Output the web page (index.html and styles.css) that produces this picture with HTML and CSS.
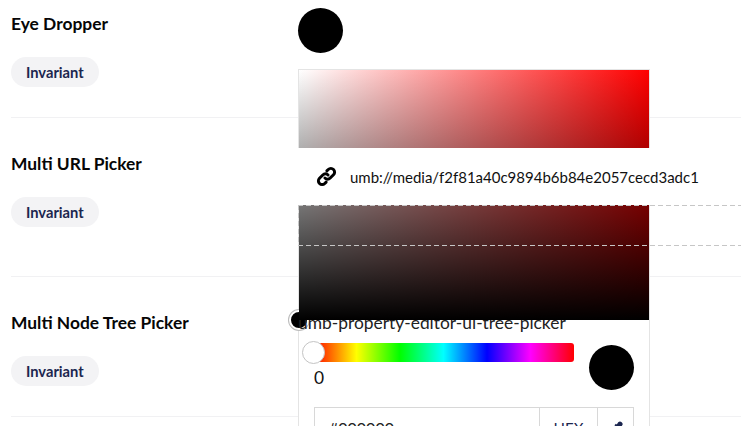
FILE: index.html
```html
<!DOCTYPE html>
<html lang="en">
<head>
<meta charset="utf-8">
<title>Property editors</title>
<link rel="stylesheet" href="styles.css">
</head>
<body>
<main class="list">
  <section class="row row-first">
    <div class="meta">
      <h3 class="label">Eye Dropper</h3>
      <span class="tag">Invariant</span>
    </div>
    <div class="editor">
      <div class="swatch"></div>
      <div class="picker">
        <span class="sv-handle"></span>
        <div class="sv"></div>
        <div class="controls">
          <div class="sliders">
            <div class="hue"><span class="hue-thumb"></span></div>
            <div class="hue-value">0</div>
          </div>
          <div class="preview"></div>
        </div>
        <div class="hex-row">
          <span class="hex-value">#000000</span>
          <span class="hex-mode">HEX</span>
          <span class="hex-swap">
            <svg viewBox="0 0 16 16" width="16" height="16" aria-hidden="true"><path d="M10.2 1.2a2.6 2.6 0 0 1 3.9 3.4L12 6.8l.9.9-1.5 1.5-5-5 1.5-1.5.9.9zM5.6 5.4l1.5 1.5L2.6 13l-1.4.6.5-1.5z" fill="#1b264f"/></svg>
          </span>
        </div>
      </div>
    </div>
  </section>
  <section class="row">
    <div class="meta">
      <h3 class="label">Multi URL Picker</h3>
      <span class="tag">Invariant</span>
    </div>
    <div class="editor">
      <div class="link-item">
        <svg class="link-icon" viewBox="0 0 24 24" aria-hidden="true"><g fill="none" stroke="#000" stroke-width="3.4" stroke-linecap="round"><path d="M10.2 13.8a4.2 4.2 0 0 0 6 0l3.8-3.8a4.2 4.2 0 0 0-6-6l-1.6 1.6"/><path d="M13.8 10.2a4.2 4.2 0 0 0-6 0L4 14a4.2 4.2 0 0 0 6 6l1.6-1.6"/></g></svg>
        <span class="link-url">umb://media/f2f81a40c9894b6b84e2057cecd3adc1</span>
      </div>
      <div class="add-box"></div>
    </div>
  </section>
  <section class="row">
    <div class="meta">
      <h3 class="label">Multi Node Tree Picker</h3>
      <span class="tag">Invariant</span>
    </div>
    <div class="editor">
      <div class="element-name">umb-property-editor-ui-tree-picker</div>
    </div>
  </section>
</main>
</body>
</html>
```
FILE: styles.css
```css
* { box-sizing: border-box; }
html, body { margin: 0; height: 100%; overflow: hidden; background: #fff; }
body { font-family: Lato, "Open Sans", sans-serif; color: #000; }
.list { padding-left: 11px; }
.row {
  display: grid;
  grid-template-columns: 287px 1fr;
  padding: 30px 0;
  border-bottom: 1px solid #f1f1f3;
}
.row-first { padding-top: 8px; }
.meta { display: flex; flex-direction: column; align-items: flex-start; }
.label {
  margin: 0 0 17px;
  font-size: 17.4px;
  line-height: 32px;
  font-weight: 700;
  color: #060606;
}
.tag {
  height: 30px;
  padding: 0 15px;
  border-radius: 15px;
  background: #f3f3f5;
  color: #1b264f;
  font-size: 14.7px;
  font-weight: 700;
  line-height: 30px;
}
.editor { position: relative; min-width: 0; }
.swatch { width: 45px; height: 45px; border-radius: 50%; background: #000; }
.picker {
  position: absolute;
  top: 61px;
  left: 0;
  width: 352px;
  height: 400px;
  background: #fff;
  border: 1px solid #e4e4e4;
}
.sv {
  position: relative;
  z-index: 3;
  height: 250px;
  background: linear-gradient(to top, #000, transparent), linear-gradient(to right, #fff, #f00);
}
.sv-handle {
  position: absolute;
  z-index: 1;
  left: -10px;
  top: 240px;
  width: 20px;
  height: 20px;
  border-radius: 50%;
  background: #000;
  border: 2px solid #fff;
  box-shadow: 0 0 0 1px #bbb;
}
.controls { display: flex; align-items: flex-start; padding: 25px 15px 0 3px; }
.sliders { width: 272px; }
.hue {
  position: relative;
  height: 19px;
  margin: -2px 0 0 11px;
  border-radius: 3px;
  background: linear-gradient(to right, #f00, #ff0 16.66%, #0f0 33.33%, #0ff 50%, #00f 66.66%, #f0f 83.33%, #f00);
}
.hue-thumb {
  position: absolute;
  top: -2px;
  left: -11px;
  width: 23px;
  height: 23px;
  border-radius: 50%;
  background: #fff;
  border: 1px solid #c4c4c4;
}
.hue-value { margin: 6px 0 0 12px; font-size: 17.4px; line-height: 20px; color: #111; }
.preview { width: 45px; height: 45px; margin-left: 15px; border-radius: 50%; background: #000; flex: none; }
.hex-row {
  display: grid;
  grid-template-columns: 224px 58px 36px;
  width: 320px;
  height: 40px;
  margin: 17px 0 0 15px;
  border: 1px solid #d8d8d8;
  font-size: 15px;
  line-height: 40px;
  color: #1b264f;
}
.hex-value { padding-left: 14px; font-size: 16px; color: #222; }
.hex-mode { border-left: 1px solid #d8d8d8; text-align: center; }
.hex-swap { border-left: 1px solid #d8d8d8; display: flex; justify-content: center; padding-top: 13px; }
.link-item {
  position: relative;
  z-index: 4;
  display: flex;
  align-items: center;
  height: 57px;
  padding-left: 18px;
  background: #fff;
}
.link-icon { width: 21px; height: 21px; flex: none; }
.link-url { margin-left: 13px; font-size: 15px; color: #111; white-space: nowrap; }
.add-box {
  position: relative;
  z-index: 4;
  height: 41px;
  margin-right: -10px;
  background-image:
    repeating-linear-gradient(to right, #c6c6c6 0 5px, transparent 5px 8px),
    repeating-linear-gradient(to right, #c6c6c6 0 5px, transparent 5px 8px),
    repeating-linear-gradient(to bottom, #c6c6c6 0 5px, transparent 5px 8px);
  background-size: 100% 1px, 100% 1px, 1px 100%;
  background-position: left top, left bottom, left top;
  background-repeat: no-repeat;
}
.element-name {
  position: relative;
  z-index: 2;
  font-size: 17.4px;
  line-height: 32px;
  color: #222;
  white-space: nowrap;
}
```
